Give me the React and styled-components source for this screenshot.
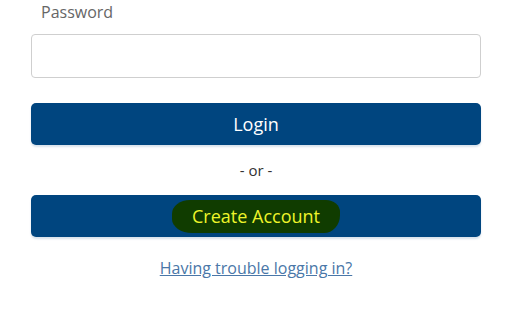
import React from "react";
import styled, { createGlobalStyle } from "styled-components";

const GlobalStyle = createGlobalStyle`
  body {
    margin: 0;
    background: #fff;
    font-family: "Open Sans", "Liberation Sans", sans-serif;
  }
`;

const Form = styled.form`
  display: flex;
  flex-direction: column;
  padding: 0 30px 0 31px;
`;

const Label = styled.label`
  display: block;
  margin: 1px 0 0 10px;
  font-size: 16px;
  line-height: 22px;
  color: #666;
`;

const Input = styled.input`
  box-sizing: border-box;
  width: 100%;
  height: 44px;
  margin-top: 11px;
  border: 1px solid #cfcfcf;
  border-radius: 4px;
  padding: 0 12px;
  font-size: 16px;
  font-family: inherit;
`;

const Button = styled.button`
  box-sizing: border-box;
  width: 100%;
  height: 42px;
  margin-top: ${(p) => p.$top}px;
  border: none;
  border-radius: 5px;
  background: #00457f;
  color: #fff;
  font-family: inherit;
  font-size: 18px;
  box-shadow: 0 2px 2px rgba(0, 69, 127, 0.15);
  display: flex;
  align-items: center;
  justify-content: center;
  cursor: pointer;
`;

const Scribble = styled.span`
  background: #103c00;
  color: #eef52a;
  padding: 6px 20px 6px 20px;
  border-radius: 18px 14px 16px 20px / 14px 12px 18px 14px;
  font-size: 18px;
  line-height: 21px;
`;

const Or = styled.div`
  margin-top: 14px;
  text-align: center;
  font-size: 15px;
  line-height: 22px;
  color: #333;
`;

const Help = styled.a`
  margin-top: 20px;
  align-self: center;
  font-size: 16px;
  line-height: 22px;
  color: #4a77a8;
  text-decoration: underline;
`;

export default function App() {
  return (
    <>
      <GlobalStyle />
      <Form onSubmit={(e) => e.preventDefault()}>
        <Label htmlFor="pw">Password</Label>
        <Input id="pw" type="password" />
        <Button $top={25}>Login</Button>
        <Or>- or -</Or>
        <Button $top={14}>
          <Scribble>Create Account</Scribble>
        </Button>
        <Help href="#">Having trouble logging in?</Help>
      </Form>
    </>
  );
}
